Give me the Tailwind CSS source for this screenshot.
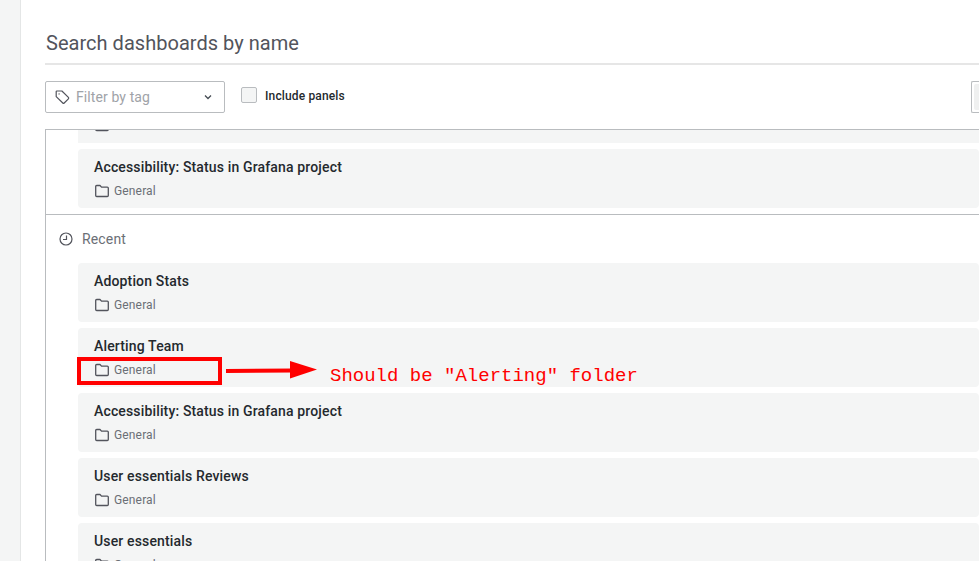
<!DOCTYPE html>
<html lang="en">
<head>
  <meta charset="UTF-8">
  <title>Search dashboards</title>
  <script src="https://cdn.jsdelivr.net/npm/@tailwindcss/browser@4"></script>
</head>
<body class="bg-white">
  <div class="relative flex h-[561px] w-[979px] overflow-hidden font-['Roboto',sans-serif]">
    <!-- sidebar -->
    <div class="w-[21px] shrink-0 border-r border-[#e4e6e6] bg-[#f4f5f5]"></div>

    <!-- main -->
    <div class="min-w-0 flex-1 pl-[24px]">
      <div class="mt-[30px] h-[35px] border-b-2 border-[#e6e6e6] pl-px text-[20px] leading-[26px] tracking-[0.03px] text-[#52545c]">Search dashboards by name</div>

      <div class="mt-4 flex h-[32px] items-start">
        <div class="flex h-[32px] w-[180px] items-center rounded-[2px] border border-[#b9bcbf] pl-[9px] pr-[12px]">
          <svg class="h-4 w-4 shrink-0" viewBox="0 0 16 16" fill="none" stroke="#52545c" stroke-width="1.200"><path d="M1.200 2.600v5l6.600 6.400a1 1 0 0 0 1.400 0l4.200-4.200a1 1 0 0 0 0-1.400L6.900 2H1.800a.6.6 0 0 0-.6.6z" stroke-linejoin="round"/><circle cx="4.100" cy="4.900" r=".7" fill="#52545c" stroke="none"/></svg>
          <span class="ml-[5px] flex-1 text-sm tracking-[0.1px] text-[#9fa3a8]">Filter by tag</span>
          <svg class="h-2 w-2" viewBox="0 0 8 8" fill="none" stroke="#464c54" stroke-width="1.300"><path d="M1 2.500l3 3 3-3"/></svg>
        </div>
        <div class="ml-4 mt-[6px] h-4 w-4 rounded-[2px] border border-[#b9bcbf] bg-[#f4f5f5]"></div>
        <span class="ml-2 mt-[7px] text-xs leading-4 font-medium tracking-[0.15px] text-[#24292e]">Include panels</span>
        <div class="ml-auto h-[32px] w-[8px] rounded-l-[2px] border-y border-l border-[#b9bcbf] p-[2px] pr-0"><div class="h-full rounded-l-[2px] bg-[#eff0f0]"></div></div>
      </div>

      <!-- results, scrolled part way down -->
      <div class="mt-[16px] h-[500px] overflow-hidden border-t border-l border-[#b9bcbf] tracking-[0.15px]">
        <div class="-mt-[46px] flex flex-col">
          <div class="ml-[32px] flex h-[59px] flex-col justify-end bg-[#f4f5f5] pb-[11px] pl-[16px]"><svg class="ml-px h-[14px] w-[14px]" viewBox="0 0 14 14" fill="none" stroke="#52545c" stroke-width="1.300"><path d="M.7 2.500a1 1 0 0 1 1-1h3.300l1.500 1.600h5.800a1 1 0 0 1 1 1V11.500a1 1 0 0 1-1 1H1.700a1 1 0 0 1-1-1z" stroke-linejoin="round"/></svg></div>
          <div class="mt-[6px] ml-[32px] flex h-[59px] flex-col rounded-sm bg-[#f4f5f5] pt-[9px] pl-[16px]">
            <span class="text-sm leading-[18px] font-medium text-[#24292e]">Accessibility: Status in Grafana project</span>
            <span class="mt-[7px] flex items-center text-xs leading-[16px] text-[#6b6f76]"><svg class="mr-[5px] ml-px h-[14px] w-[14px]" viewBox="0 0 14 14" fill="none" stroke="#52545c" stroke-width="1.300"><path d="M.7 2.500a1 1 0 0 1 1-1h3.300l1.500 1.600h5.800a1 1 0 0 1 1 1V11.500a1 1 0 0 1-1 1H1.700a1 1 0 0 1-1-1z" stroke-linejoin="round"/></svg>General</span>
          </div>

          <div class="mt-[6px] border-t border-[#b9bcbf]"></div>
          <div class="flex h-[48px] items-center pl-[13px] text-sm text-[#6b6f76]">
            <svg class="mr-[9px] h-[14px] w-[14px]" viewBox="0 0 14 14" fill="none" stroke="#52545c" stroke-width="1.200"><circle cx="7" cy="7" r="6"/><path d="M7.500 3.500V7.500H4"/></svg>Recent
          </div>

          <div class="ml-[32px] flex h-[59px] flex-col rounded-sm bg-[#f4f5f5] pt-[9px] pl-[16px]">
            <span class="text-sm leading-[18px] font-medium text-[#24292e]">Adoption Stats</span>
            <span class="mt-[7px] flex items-center text-xs leading-[16px] text-[#6b6f76]"><svg class="mr-[5px] ml-px h-[14px] w-[14px]" viewBox="0 0 14 14" fill="none" stroke="#52545c" stroke-width="1.300"><path d="M.7 2.500a1 1 0 0 1 1-1h3.300l1.500 1.600h5.800a1 1 0 0 1 1 1V11.500a1 1 0 0 1-1 1H1.700a1 1 0 0 1-1-1z" stroke-linejoin="round"/></svg>General</span>
          </div>
          <div class="mt-[6px] ml-[32px] flex h-[59px] flex-col rounded-sm bg-[#f4f5f5] pt-[9px] pl-[16px]">
            <span class="text-sm leading-[18px] font-medium text-[#24292e]">Alerting Team</span>
            <span class="mt-[7px] flex items-center text-xs leading-[16px] text-[#6b6f76]"><svg class="mr-[5px] ml-px h-[14px] w-[14px]" viewBox="0 0 14 14" fill="none" stroke="#52545c" stroke-width="1.300"><path d="M.7 2.500a1 1 0 0 1 1-1h3.300l1.500 1.600h5.800a1 1 0 0 1 1 1V11.500a1 1 0 0 1-1 1H1.700a1 1 0 0 1-1-1z" stroke-linejoin="round"/></svg>General</span>
          </div>
          <div class="mt-[6px] ml-[32px] flex h-[59px] flex-col rounded-sm bg-[#f4f5f5] pt-[9px] pl-[16px]">
            <span class="text-sm leading-[18px] font-medium text-[#24292e]">Accessibility: Status in Grafana project</span>
            <span class="mt-[7px] flex items-center text-xs leading-[16px] text-[#6b6f76]"><svg class="mr-[5px] ml-px h-[14px] w-[14px]" viewBox="0 0 14 14" fill="none" stroke="#52545c" stroke-width="1.300"><path d="M.7 2.500a1 1 0 0 1 1-1h3.300l1.500 1.600h5.800a1 1 0 0 1 1 1V11.500a1 1 0 0 1-1 1H1.700a1 1 0 0 1-1-1z" stroke-linejoin="round"/></svg>General</span>
          </div>
          <div class="mt-[6px] ml-[32px] flex h-[59px] flex-col rounded-sm bg-[#f4f5f5] pt-[9px] pl-[16px]">
            <span class="text-sm leading-[18px] font-medium text-[#24292e]">User essentials Reviews</span>
            <span class="mt-[7px] flex items-center text-xs leading-[16px] text-[#6b6f76]"><svg class="mr-[5px] ml-px h-[14px] w-[14px]" viewBox="0 0 14 14" fill="none" stroke="#52545c" stroke-width="1.300"><path d="M.7 2.500a1 1 0 0 1 1-1h3.300l1.500 1.600h5.800a1 1 0 0 1 1 1V11.500a1 1 0 0 1-1 1H1.700a1 1 0 0 1-1-1z" stroke-linejoin="round"/></svg>General</span>
          </div>
          <div class="mt-[6px] ml-[32px] flex h-[59px] flex-col rounded-sm bg-[#f4f5f5] pt-[9px] pl-[16px]">
            <span class="text-sm leading-[18px] font-medium text-[#24292e]">User essentials</span>
            <span class="mt-[7px] flex items-center text-xs leading-[16px] text-[#6b6f76]"><svg class="mr-[5px] ml-px h-[14px] w-[14px]" viewBox="0 0 14 14" fill="none" stroke="#52545c" stroke-width="1.300"><path d="M.7 2.500a1 1 0 0 1 1-1h3.300l1.500 1.600h5.800a1 1 0 0 1 1 1V11.500a1 1 0 0 1-1 1H1.700a1 1 0 0 1-1-1z" stroke-linejoin="round"/></svg>General</span>
          </div>
        </div>
      </div>
    </div>

    <!-- annotation drawn over the screenshot -->
    <div class="absolute top-[357px] left-[77px] h-[28px] w-[145px] border-4 border-[#f00]"></div>
    <svg class="absolute top-[359px] left-[225px] h-[22px] w-[95px]" viewBox="0 0 95 22"><path d="M1 12 L67 11.400" stroke="#f00" stroke-width="4"/><path d="M65 2 L92 10.500 L65 19.500z" fill="#f00"/></svg>
    <span class="absolute top-[365px] left-[330px] font-['Liberation_Mono',monospace] text-[19px] leading-[22px] whitespace-pre text-[#f00]">Should be "Alerting" folder</span>
  </div>
</body>
</html>
